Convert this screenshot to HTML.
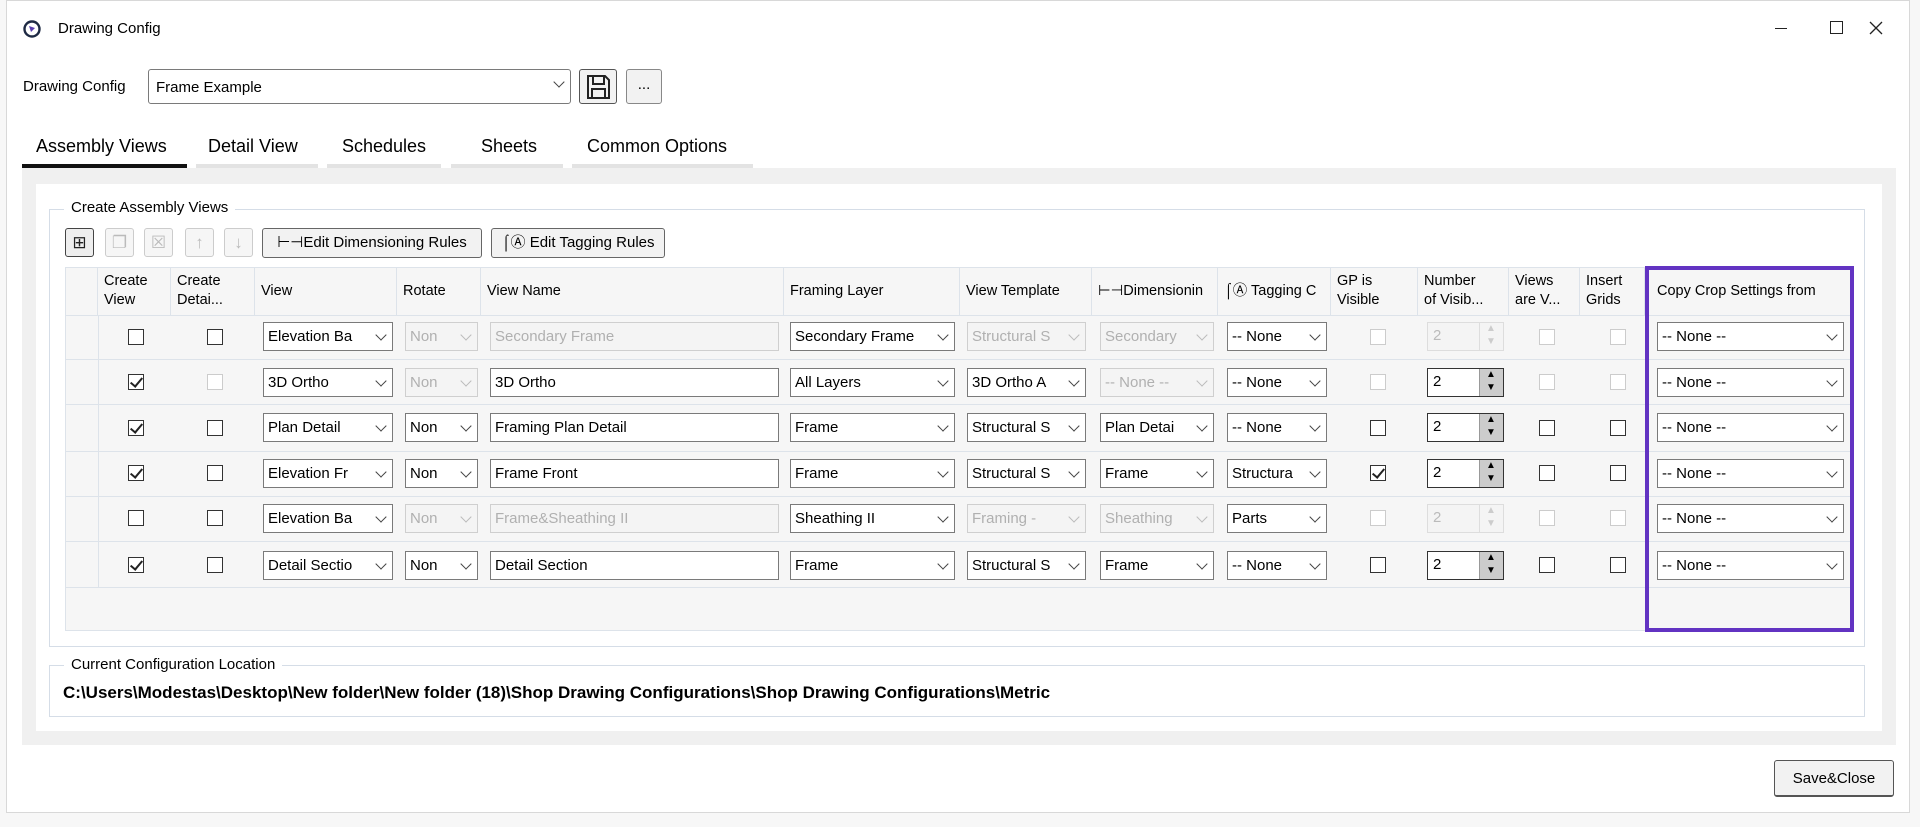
<!DOCTYPE html>
<html><head><meta charset="utf-8"><style>
*{box-sizing:border-box;margin:0;padding:0}
body{width:1920px;height:827px;background:#f7f7f7;font-family:"Liberation Sans",sans-serif;font-size:15px;color:#000;position:relative;overflow:hidden}
.a{position:absolute}
.win{left:6px;top:0;width:1904px;height:813px;background:#fff;border:1px solid #d8d8d8}
.cb{position:absolute;height:29px;background:#fff;border:1px solid #7a7a7a;padding:5px 4px;white-space:nowrap;overflow:hidden;font-size:15px;line-height:17px}
.cb::after{content:"";position:absolute;right:7px;top:8px;width:7px;height:7px;border-right:1.3px solid #444;border-bottom:1.3px solid #444;transform:rotate(45deg)}
.cb.t::after{display:none}
.cb.d{background:#f4f4f4;border-color:#cfcfcf;color:#b0b0b0}
.cb.d::after{border-color:#bbb}
.ck{position:absolute;width:16px;height:16px;border:1px solid #333;background:#fff}
.ck.d{border-color:#ccc}
.ck.c::after{content:"";position:absolute;left:4px;top:0px;width:5px;height:10px;border-right:2px solid #222;border-bottom:2px solid #222;transform:rotate(40deg)}
.hd{position:absolute;top:267px;height:48px;border-right:1px solid #dde3ea;font-size:14.5px;line-height:19px;padding:4px 6px;display:flex;align-items:center}
.rl{position:absolute;left:65px;width:1786px;height:1px;background:#dde3ea}
.sp{position:absolute;height:29px;background:#fff;border:1px solid #333;padding:4px 5px}
.sp i{position:absolute;right:0;top:0;width:24px;height:27px;background:#ccc;border-left:1px solid #999}
.sp i::before{content:"▲";position:absolute;left:6px;top:0;font-size:10px;font-style:normal}
.sp i::after{content:"▼";position:absolute;left:6px;top:13px;font-size:10px;font-style:normal}
.sp.d{background:#f4f4f4;border-color:#ddd;color:#bbb}
.sp.d i{background:#f4f4f4;border-color:#ddd;color:#ccc}
.btn{position:absolute;border:1px solid #888;border-radius:3px;background:#f2f2f2;text-align:center;font-size:15px}
.tb{position:absolute;top:228px;width:29px;height:29px;border:1px solid #ccc;border-radius:3px;background:#f6f6f6;color:#bbb;text-align:center;line-height:27px;font-size:17px}
.tab{position:absolute;top:136px;font-size:18px}
</style></head><body>
<div class="a win"></div>
<svg class="a" style="left:22px;top:19px" width="20" height="20" viewBox="0 0 20 20"><circle cx="10" cy="10" r="7.5" fill="none" stroke="#1e2a44" stroke-width="2.4"/><path d="M7 7 L13 9 L9 13Z" fill="#5a3fb0"/></svg>
<div class="a" style="left:58px;top:20px;font-size:15px">Drawing Config</div>
<div class="a" style="left:1775px;top:28px;width:12px;height:1px;background:#222"></div>
<div class="a" style="left:1830px;top:21px;width:13px;height:13px;border:1.3px solid #222"></div>
<svg class="a" style="left:1869px;top:21px" width="14" height="14" viewBox="0 0 14 14"><path d="M1 1L13 13M13 1L1 13" stroke="#222" stroke-width="1.3"/></svg>

<div class="a" style="left:23px;top:78px">Drawing Config</div>
<div class="cb" style="left:148px;top:69px;width:423px;height:35px;padding:9px 7px;border-radius:3px">Frame Example</div>
<div class="btn" style="left:579px;top:69px;width:38px;height:35px;border-color:#555"><svg width="28" height="28" viewBox="0 0 28 28" style="margin-top:3px"><path d="M4 3H21L25 7V25H4Z M9 3V11H20V3 M8 25V16H21V25" fill="none" stroke="#222" stroke-width="2"/></svg></div>
<div class="btn" style="left:626px;top:69px;width:36px;height:35px;line-height:30px">...</div>

<div class="tab" style="left:36px">Assembly Views</div>
<div class="tab" style="left:208px">Detail View</div>
<div class="tab" style="left:342px">Schedules</div>
<div class="tab" style="left:481px">Sheets</div>
<div class="tab" style="left:587px">Common Options</div>
<div class="a" style="left:22px;top:164px;width:165px;height:4px;background:#111"></div>
<div class="a" style="left:196px;top:164px;width:122px;height:4px;background:#e3e3e3"></div>
<div class="a" style="left:327px;top:164px;width:114px;height:4px;background:#e3e3e3"></div>
<div class="a" style="left:451px;top:164px;width:112px;height:4px;background:#e3e3e3"></div>
<div class="a" style="left:572px;top:164px;width:181px;height:4px;background:#e3e3e3"></div>

<div class="a" style="left:22px;top:168px;width:1874px;height:577px;background:#f0f0f0"></div>
<div class="a" style="left:36px;top:184px;width:1846px;height:547px;background:#fff"></div>
<div class="a" style="left:49px;top:209px;width:1816px;height:438px;border:1px solid #d5dde7"></div>
<div class="a" style="left:64px;top:199px;background:#fff;padding:0 7px">Create Assembly Views</div>

<div class="tb" style="left:65px;border-color:#444;color:#222;background:#eee">⊞</div>
<div class="tb" style="left:105px">❐</div>
<div class="tb" style="left:144px">☒</div>
<div class="tb" style="left:185px">↑</div>
<div class="tb" style="left:224px">↓</div>
<div class="btn" style="left:262px;top:228px;width:220px;height:30px;line-height:28px;border-color:#666">⊢⊣Edit Dimensioning Rules</div>
<div class="btn" style="left:491px;top:228px;width:174px;height:30px;line-height:28px;border-color:#666">⌠Ⓐ Edit Tagging Rules</div>

<div class="a" style="left:65px;top:267px;width:1786px;height:364px;background:#f6f6f6;border:1px solid #dde3ea"></div>
<div class="hd" style="left:65px;width:33px"></div>
<div class="hd" style="left:98px;width:73px">Create<br>View</div>
<div class="hd" style="left:171px;width:84px">Create<br>Detai...</div>
<div class="hd" style="left:255px;width:142px">View</div>
<div class="hd" style="left:397px;width:84px">Rotate</div>
<div class="hd" style="left:481px;width:303px">View Name</div>
<div class="hd" style="left:784px;width:176px">Framing Layer</div>
<div class="hd" style="left:960px;width:132px">View Template</div>
<div class="hd" style="left:1092px;width:126px;overflow:hidden;white-space:nowrap">⊢⊣Dimensionin</div>
<div class="hd" style="left:1218px;width:113px;overflow:hidden;white-space:nowrap">⌠Ⓐ Tagging C</div>
<div class="hd" style="left:1331px;width:87px">GP is<br>Visible</div>
<div class="hd" style="left:1418px;width:91px">Number<br>of Visib...</div>
<div class="hd" style="left:1509px;width:71px">Views<br>are V...</div>
<div class="hd" style="left:1580px;width:65px">Insert<br>Grids</div>
<div class="hd" style="left:1645px;width:206px;padding-left:12px">Copy Crop Settings from</div>
<div class="rl" style="top:315px"></div><div class="rl" style="top:359px"></div><div class="rl" style="top:404px"></div><div class="rl" style="top:451px"></div><div class="rl" style="top:496px"></div><div class="rl" style="top:541px"></div><div class="rl" style="top:587px"></div>
<div class="a" style="left:98px;top:315px;width:1px;height:272px;background:#dde3ea"></div>

<!-- row 1 -->
<div class="ck" style="left:128px;top:329px"></div><div class="ck" style="left:207px;top:329px"></div>
<div class="cb" style="left:263px;top:322px;width:130px">Elevation Ba</div>
<div class="cb d" style="left:405px;top:322px;width:73px">Non</div>
<div class="cb d t" style="left:490px;top:322px;width:289px">Secondary Frame</div>
<div class="cb" style="left:790px;top:322px;width:165px">Secondary Frame</div>
<div class="cb d" style="left:967px;top:322px;width:119px">Structural S</div>
<div class="cb d" style="left:1100px;top:322px;width:114px">Secondary</div>
<div class="cb" style="left:1227px;top:322px;width:100px">-- None</div>
<div class="ck d" style="left:1370px;top:329px"></div>
<div class="sp d" style="left:1427px;top:322px;width:77px">2<i></i></div>
<div class="ck d" style="left:1539px;top:329px"></div><div class="ck d" style="left:1610px;top:329px"></div>
<div class="cb" style="left:1657px;top:322px;width:187px">-- None --</div>
<!-- row 2 -->
<div class="ck c" style="left:128px;top:374px"></div><div class="ck d" style="left:207px;top:374px"></div>
<div class="cb" style="left:263px;top:368px;width:130px">3D Ortho</div>
<div class="cb d" style="left:405px;top:368px;width:73px">Non</div>
<div class="cb t" style="left:490px;top:368px;width:289px">3D Ortho</div>
<div class="cb" style="left:790px;top:368px;width:165px">All Layers</div>
<div class="cb" style="left:967px;top:368px;width:119px">3D Ortho A</div>
<div class="cb d" style="left:1100px;top:368px;width:114px">-- None --</div>
<div class="cb" style="left:1227px;top:368px;width:100px">-- None</div>
<div class="ck d" style="left:1370px;top:374px"></div>
<div class="sp" style="left:1427px;top:368px;width:77px">2<i></i></div>
<div class="ck d" style="left:1539px;top:374px"></div><div class="ck d" style="left:1610px;top:374px"></div>
<div class="cb" style="left:1657px;top:368px;width:187px">-- None --</div>
<!-- row 3 -->
<div class="ck c" style="left:128px;top:420px"></div><div class="ck" style="left:207px;top:420px"></div>
<div class="cb" style="left:263px;top:413px;width:130px">Plan Detail</div>
<div class="cb" style="left:405px;top:413px;width:73px">Non</div>
<div class="cb t" style="left:490px;top:413px;width:289px">Framing Plan Detail</div>
<div class="cb" style="left:790px;top:413px;width:165px">Frame</div>
<div class="cb" style="left:967px;top:413px;width:119px">Structural S</div>
<div class="cb" style="left:1100px;top:413px;width:114px">Plan Detai</div>
<div class="cb" style="left:1227px;top:413px;width:100px">-- None</div>
<div class="ck" style="left:1370px;top:420px"></div>
<div class="sp" style="left:1427px;top:413px;width:77px">2<i></i></div>
<div class="ck" style="left:1539px;top:420px"></div><div class="ck" style="left:1610px;top:420px"></div>
<div class="cb" style="left:1657px;top:413px;width:187px">-- None --</div>
<!-- row 4 -->
<div class="ck c" style="left:128px;top:465px"></div><div class="ck" style="left:207px;top:465px"></div>
<div class="cb" style="left:263px;top:459px;width:130px">Elevation Fr</div>
<div class="cb" style="left:405px;top:459px;width:73px">Non</div>
<div class="cb t" style="left:490px;top:459px;width:289px">Frame Front</div>
<div class="cb" style="left:790px;top:459px;width:165px">Frame</div>
<div class="cb" style="left:967px;top:459px;width:119px">Structural S</div>
<div class="cb" style="left:1100px;top:459px;width:114px">Frame</div>
<div class="cb" style="left:1227px;top:459px;width:100px">Structura</div>
<div class="ck c" style="left:1370px;top:465px"></div>
<div class="sp" style="left:1427px;top:459px;width:77px">2<i></i></div>
<div class="ck" style="left:1539px;top:465px"></div><div class="ck" style="left:1610px;top:465px"></div>
<div class="cb" style="left:1657px;top:459px;width:187px">-- None --</div>
<!-- row 5 -->
<div class="ck" style="left:128px;top:510px"></div><div class="ck" style="left:207px;top:510px"></div>
<div class="cb" style="left:263px;top:504px;width:130px">Elevation Ba</div>
<div class="cb d" style="left:405px;top:504px;width:73px">Non</div>
<div class="cb d t" style="left:490px;top:504px;width:289px">Frame&amp;Sheathing II</div>
<div class="cb" style="left:790px;top:504px;width:165px">Sheathing II</div>
<div class="cb d" style="left:967px;top:504px;width:119px">Framing -</div>
<div class="cb d" style="left:1100px;top:504px;width:114px">Sheathing</div>
<div class="cb" style="left:1227px;top:504px;width:100px">Parts</div>
<div class="ck d" style="left:1370px;top:510px"></div>
<div class="sp d" style="left:1427px;top:504px;width:77px">2<i></i></div>
<div class="ck d" style="left:1539px;top:510px"></div><div class="ck d" style="left:1610px;top:510px"></div>
<div class="cb" style="left:1657px;top:504px;width:187px">-- None --</div>
<!-- row 6 -->
<div class="ck c" style="left:128px;top:557px"></div><div class="ck" style="left:207px;top:557px"></div>
<div class="cb" style="left:263px;top:551px;width:130px">Detail Sectio</div>
<div class="cb" style="left:405px;top:551px;width:73px">Non</div>
<div class="cb t" style="left:490px;top:551px;width:289px">Detail Section</div>
<div class="cb" style="left:790px;top:551px;width:165px">Frame</div>
<div class="cb" style="left:967px;top:551px;width:119px">Structural S</div>
<div class="cb" style="left:1100px;top:551px;width:114px">Frame</div>
<div class="cb" style="left:1227px;top:551px;width:100px">-- None</div>
<div class="ck" style="left:1370px;top:557px"></div>
<div class="sp" style="left:1427px;top:551px;width:77px">2<i></i></div>
<div class="ck" style="left:1539px;top:557px"></div><div class="ck" style="left:1610px;top:557px"></div>
<div class="cb" style="left:1657px;top:551px;width:187px">-- None --</div>

<div class="a" style="left:1645px;top:266px;width:209px;height:366px;border:4px solid #6233c2"></div>

<div class="a" style="left:49px;top:665px;width:1816px;height:52px;border:1px solid #d5dde7"></div>
<div class="a" style="left:64px;top:656px;background:#fff;padding:0 7px">Current Configuration Location</div>
<div class="a" style="left:63px;top:683px;font-weight:bold;font-size:17px">C:\Users\Modestas\Desktop\New folder\New folder (18)\Shop Drawing Configurations\Shop Drawing Configurations\Metric</div>

<div class="btn" style="left:1774px;top:760px;width:120px;height:37px;line-height:35px;border-color:#555;border-bottom-width:2px">Save&amp;Close</div>
</body></html>
